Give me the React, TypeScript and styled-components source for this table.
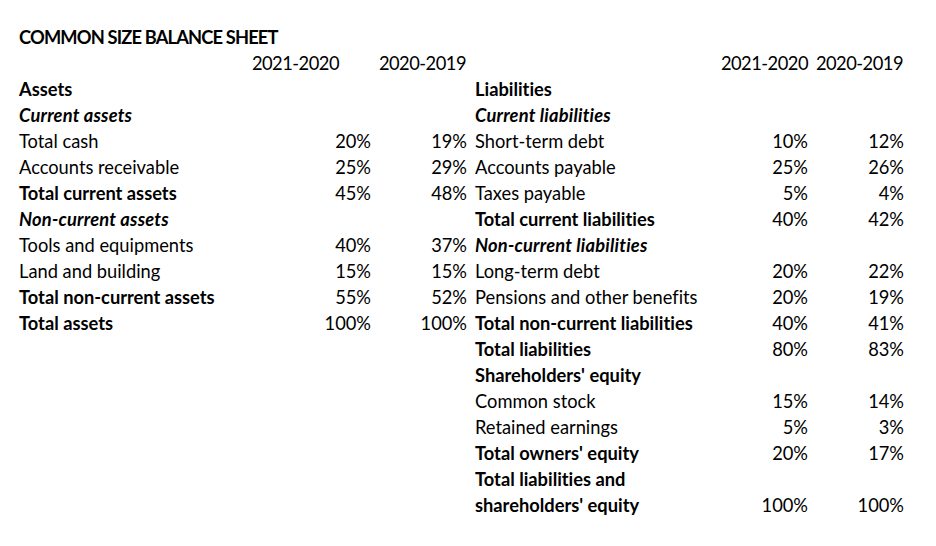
import React from 'react';
import styled, { createGlobalStyle } from 'styled-components';

const GlobalStyle = createGlobalStyle`
  body {
    margin: 0;
    background: #ffffff;
    color: #000000;
    font-family: Lato, 'Open Sans', sans-serif;
    font-variant-ligatures: none;
  }
`;

const Sheet = styled.div`
  padding: 24px 0 0 19px;
  display: grid;
  grid-template-columns: 256px 96px 97px 244px 96px 96px;
  grid-auto-rows: 26px;
  font-size: 18.3px;
  line-height: 26px;
`;

const Title = styled.div`
  grid-column: 1 / -1;
  font-weight: 700;
  letter-spacing: -0.85px;
  white-space: nowrap;
`;

const Label = styled.div<{ $weight?: 'bold' | 'sub'; $side?: 'right' }>`
  white-space: nowrap;
  padding-left: ${(p) => (p.$side === 'right' ? '7px' : '0')};
  font-weight: ${(p) => (p.$weight ? 700 : 400)};
  font-style: ${(p) => (p.$weight === 'sub' ? 'italic' : 'normal')};
  letter-spacing: ${(p) => (p.$weight === 'sub' ? '0.2px' : '0')};
`;

const Value = styled.div<{ $pad?: number }>`
  display: flex;
  justify-content: flex-end;
  white-space: nowrap;
  margin-right: ${(p) => p.$pad ?? 0}px;
`;

const Year = styled(Value)`
  letter-spacing: -0.5px;
`;

type Line = { label: string; weight?: 'bold' | 'sub'; a?: string; b?: string };

const assets: Line[] = [
  { label: 'Assets', weight: 'bold' },
  { label: 'Current assets', weight: 'sub' },
  { label: 'Total cash', a: '20%', b: '19%' },
  { label: 'Accounts receivable', a: '25%', b: '29%' },
  { label: 'Total current assets', weight: 'bold', a: '45%', b: '48%' },
  { label: 'Non-current assets', weight: 'sub' },
  { label: 'Tools and equipments', a: '40%', b: '37%' },
  { label: 'Land and building', a: '15%', b: '15%' },
  { label: 'Total non-current assets', weight: 'bold', a: '55%', b: '52%' },
  { label: 'Total assets', weight: 'bold', a: '100%', b: '100%' },
];

const liabilities: Line[] = [
  { label: 'Liabilities', weight: 'bold' },
  { label: 'Current liabilities', weight: 'sub' },
  { label: 'Short-term debt', a: '10%', b: '12%' },
  { label: 'Accounts payable', a: '25%', b: '26%' },
  { label: 'Taxes payable', a: '5%', b: '4%' },
  { label: 'Total current liabilities', weight: 'bold', a: '40%', b: '42%' },
  { label: 'Non-current liabilities', weight: 'sub' },
  { label: 'Long-term debt', a: '20%', b: '22%' },
  { label: 'Pensions and other benefits', a: '20%', b: '19%' },
  { label: 'Total non-current liabilities', weight: 'bold', a: '40%', b: '41%' },
  { label: 'Total liabilities', weight: 'bold', a: '80%', b: '83%' },
  { label: "Shareholders' equity", weight: 'bold' },
  { label: 'Common stock', a: '15%', b: '14%' },
  { label: 'Retained earnings', a: '5%', b: '3%' },
  { label: "Total owners' equity", weight: 'bold', a: '20%', b: '17%' },
  { label: 'Total liabilities and', weight: 'bold' },
  { label: "shareholders' equity", weight: 'bold', a: '100%', b: '100%' },
];

export default function App() {
  const rows = Math.max(assets.length, liabilities.length);

  return (
    <>
      <GlobalStyle />
      <Sheet>
        <Title>COMMON SIZE BALANCE SHEET</Title>
        <div />
        <Year $pad={32}>2021-2020</Year>
        <Year $pad={2}>2020-2019</Year>
        <div />
        <Year>2021-2020</Year>
        <Year $pad={1}>2020-2019</Year>
        {Array.from({ length: rows }).map((_, i) => {
          const l = assets[i];
          const r = liabilities[i];
          return (
            <React.Fragment key={i}>
              <Label $weight={l?.weight}>{l?.label}</Label>
              <Value>{l?.a}</Value>
              <Value $pad={1}>{l?.b}</Value>
              <Label $weight={r?.weight} $side="right">
                {r?.label}
              </Label>
              <Value>{r?.a}</Value>
              <Value>{r?.b}</Value>
            </React.Fragment>
          );
        })}
      </Sheet>
    </>
  );
}
